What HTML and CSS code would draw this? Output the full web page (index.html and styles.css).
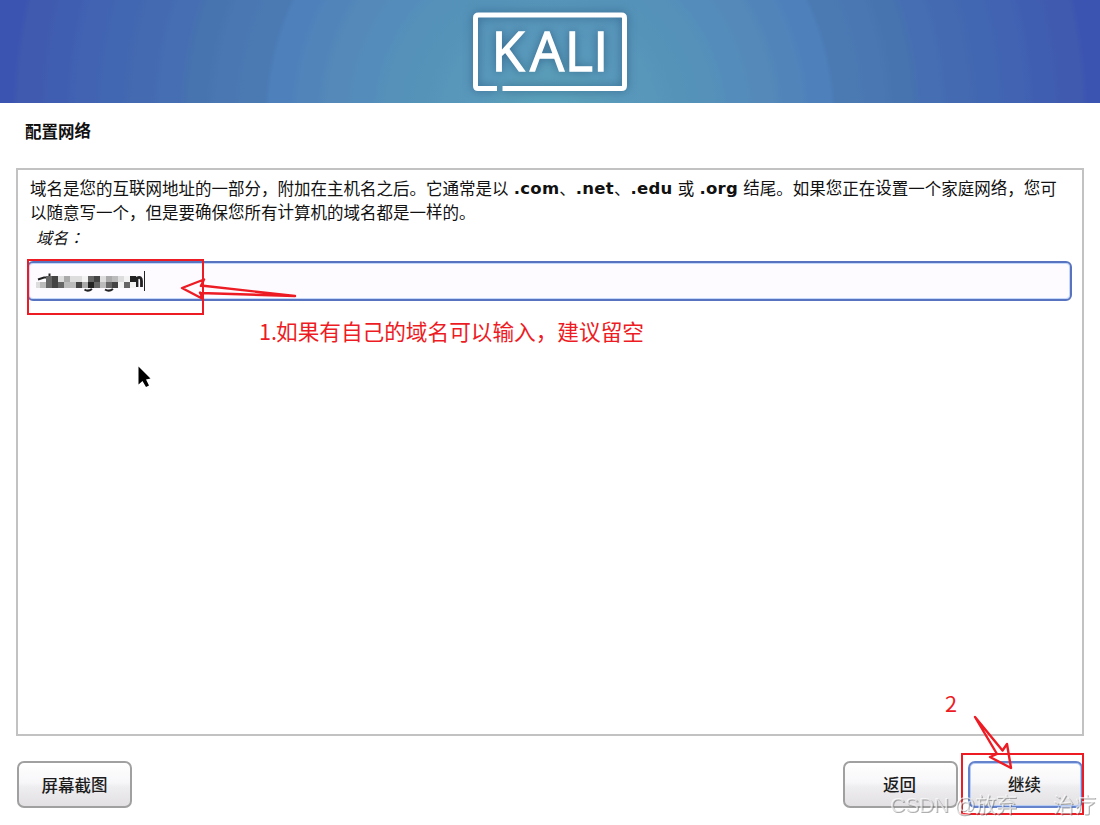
FILE: index.html
```
<!DOCTYPE html>
<html lang="zh-CN">
<head>
<meta charset="utf-8">
<title>配置网络</title>
<link rel="stylesheet" href="styles.css">
</head>
<body>
<div class="installer">
  <header class="banner">
    <svg class="logo" width="180" height="103" viewBox="460 0 180 103">
      <path d="M497 88.500H478Q475.500 88.500 475.500 86V18Q475.500 15 478.500 15H621.500Q624.500 15 624.500 18V85.500Q624.500 88.500 621.500 88.500H502.500" fill="none" stroke="#fff" stroke-width="5"/>
      <text x="491.500 530 564.800 593.300" y="71" class="logo-text">KALI</text>
    </svg>
  </header>
  <h1 class="title">配置网<i>络</i></h1>
  <main class="panel">
    <p class="desc">域名是<i>您</i>的互<i>联</i>网地址的一部分，附加在主机名之后。它通常是以 <b>.com</b>、<b>.net</b>、<b>.edu</b> 或 <b>.org</b> <i>结</i>尾。如果<i>您</i>正在<i>设</i>置一个家庭网<i>络</i>，<i>您</i>可<br>以随意写一个，但是要<i>确</i>保<i>您</i>所有<i>计</i>算机的域名都是一<i>样</i>的。</p>
    <div class="label">域名<span class="colon" lang="zh-TW">：</span></div>
    <div class="field">
      <svg class="masked" width="112" height="22" viewBox="36 271 112 22" shape-rendering="crispEdges">
        <g shape-rendering="auto" fill="none" stroke="#222" stroke-width="2">
          <path d="M38 279.500L44 277.500H58M49.500 273.500V278" />
          <path d="M84.500 289.500Q88 292 92 289M105 289.500Q109 292 113 289"/>
          <path d="M137 287V278Q141.500 276 141.500 281V287" stroke-width="2.800"/>
        </g>
        <path fill="#ddd" d="M36 282h4v6h-4zM58 276h6v6h-6zM70 276h12v6h-12zM100 276h6v6h-6zM118 276h6v6h-6z"/>
        <path fill="#f3f3f3" d="M82 276h6v6h-6zM124 276h6v6h-6zM118 282h6v6h-6zM130 282h6v6h-6z"/>
        <path fill="#bbb" d="M40 282h6v6h-6zM64 282h12v6h-12zM100 282h6v6h-6zM112 276h6v6h-6z"/>
        <path fill="#aaa" d="M64 276h6v6h-6zM82 282h6v6h-6zM106 276h6v6h-6z"/>
        <path fill="#666" d="M46 276h6v12h-6zM58 282h6v6h-6zM94 282h6v6h-6zM106 282h6v6h-6zM124 282h6v6h-6zM88 276h6v6h-6z"/>
        <path fill="#444" d="M52 276h6v12h-6zM76 282h6v6h-6zM94 276h6v6h-6zM112 282h6v6h-6z"/>
        <path fill="#222" d="M88 282h6v6h-6zM130 276h6v6h-6zM144 271h1v20h-1z"/>
      </svg>
    </div>
  </main>
  <footer class="actions">
    <button class="btn shot">屏幕截<i>图</i></button>
    <button class="btn">返回</button>
    <button class="btn primary">继续</button>
  </footer>
</div>
<svg class="notes" width="1100" height="825" viewBox="0 0 1100 825">
  <g fill="none" stroke="#ed1c24" stroke-width="2">
    <rect x="28" y="260" width="175" height="54"/>
    <rect x="962" y="754" width="121" height="60"/>
    <path d="M201 285.500L295 296L200 293M204 279.500L182 288L203 299L200 292.500M204 279.500L201 286" stroke-linejoin="round" stroke-linecap="round" stroke-width="2.400"/>
    <path d="M975 717L997 754L990 757L1011 768L1007 744L1002.500 750.500Z" stroke-linejoin="round" stroke-width="2.400"/>
  </g>
  <text class="note" x="259" y="340">1.</text>
  <text class="note" x="276" y="340" textLength="368">如果有自己的域名可以输入，建议留空</text>
  <text class="note" x="945" y="712">2</text>
  <path d="M138.500 366.500V384.500L142.500 381L146 387L149 385.500L146 379.500L150.500 378.500Z" fill="#000"/>
  <g class="mark">
    <text x="890" y="812" textLength="127">CSDN @放弃</text>
    <text x="1053" y="812" textLength="43">治疗</text>
  </g>
</svg>
</body>
</html>
```
FILE: styles.css
```
* { box-sizing: border-box; }
body {
  margin: 0;
  background: #fff;
  color: #111;
  font: 16.5px/24px "DejaVu Sans", "Noto Sans CJK SC", sans-serif;
}
.installer {
  width: 1100px;
  height: 825px;
  display: flex;
  flex-direction: column;
  overflow: hidden;
}
.banner {
  height: 103px;
  flex: none;
  display: flex;
  justify-content: center;
  background: radial-gradient(circle at 550px 120px,
    #5ba1bb 22px, #5a9db9 43px 50px, #5999bb 71px 78px, #5896ba 99px 106px,
    #5593b9 127px 134px, #5591b9 155px 165px, #548dbb 178px 195px, #5489b9 206px 223px,
    #5185ba 234px 251px, #4e80bb 260px 281px, #4b7ab3 286px 306px, #4a77b1 317px 334px,
    #4773af 345px 362px, #456eb3 373px 390px, #446ab1 401px 418px, #4267b2 429px 446px,
    #4163b2 457px 474px, #405eb1 485px 502px, #3f5aae 512px 532px, #3c54b1 538px);
}
.logo { filter: drop-shadow(0 0 5px rgba(30, 70, 110, .6)); }
.logo-text {
  font: 400 54px "Open Sans", sans-serif;
  fill: #fff;
  stroke: #fff;
  stroke-width: 1.3px;
}
.title {
  margin: 18px 0 23px 25px;
  font-size: 16.5px;
  line-height: 24px;
  font-weight: 700;
}
.panel {
  flex: none;
  height: 568px;
  margin: 0 16px;
  padding: 8px 10px 0;
  border: 2px solid #c2c2c2;
}
.desc {
  margin: 0 0 0 2px;
  white-space: nowrap;
}
.desc b {
  position: relative;
  top: -1px;
  letter-spacing: .25px;
}
.desc i, .btn i, .title i {
  font-style: normal;
  line-height: 0;
  vertical-align: 1.5px;
}
.label {
  height: 24px;
  margin: -1px 0 12px 8px;
  font-style: italic;
  font-size: 16px;
}
.colon { font-family: "Noto Sans CJK TC", sans-serif; }
.field {
  width: 1045px;
  height: 40px;
  margin-left: -1px;
  padding: 8px 7px;
  border: 2px solid #5874c0;
  border-radius: 6px;
  background: #fdfbff;
  box-shadow: inset 0 0 0 1px #c3d7fa;
}
.masked { display: block; }
.actions {
  display: flex;
  gap: 10px;
  padding: 25px 17px 0;
}
.btn {
  width: 115px;
  height: 47px;
  padding: 0 2px 2px 0;
  border: 2px solid #a0a0a0;
  border-radius: 7px;
  background: linear-gradient(#fff 0, #f7f6f8 45%, #eeedef 55%, #e2e0e3 100%);
  color: #1c1c1c;
  font: 500 16.5px/24px "Noto Sans CJK SC", sans-serif;
}
.shot {
  margin-right: auto;
  padding: 0;
}
.primary {
  border-color: #6583cc;
  box-shadow: inset 0 0 0 1px #b8cdf5;
}
.notes {
  position: absolute;
  left: 0;
  top: 0;
  pointer-events: none;
}
.note {
  font: 21.700px "Noto Sans CJK SC", sans-serif;
  fill: #ed1c24;
}
.mark {
  font: 21px "Liberation Sans", "Noto Sans CJK SC", sans-serif;
  fill: rgba(255, 255, 255, .65);
  filter: drop-shadow(1px 1px 0 rgba(90, 90, 90, .75));
}
```
